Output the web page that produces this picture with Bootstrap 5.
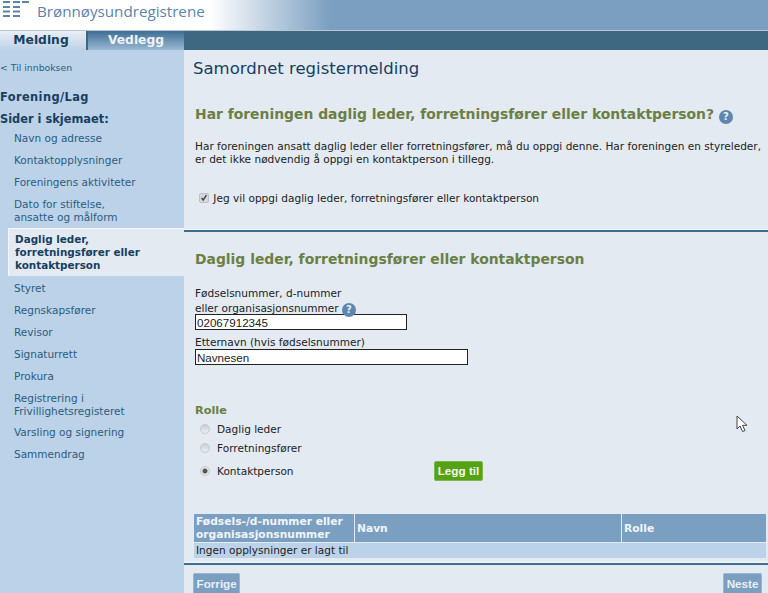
<!DOCTYPE html>
<html lang="no">
<head>
    <meta charset="UTF-8">
    <meta name="viewport" content="width=device-width, initial-scale=1.0">
    <title>Samordnet registermelding</title>
    <link href="https://cdn.jsdelivr.net/npm/bootstrap@5.3.0/dist/css/bootstrap.min.css" rel="stylesheet">
    <style>
        html, body { height: 593px; overflow: hidden; }
        body {
            font-family: "DejaVu Sans", Verdana, sans-serif;
            font-size: 10.55px;
            line-height: 13px;
            color: #222;
            background: #e3eaf2;
        }
        .top-banner {
            height: 31px;
            background: linear-gradient(90deg, #fff 0, #fff 210px, #7b9fc1 330px, #7b9fc1 100%);
            border-bottom: 1px solid #b9c6d2;
        }
        .logo-mark { margin: 0; display: block; flex: none; }
        .logo-name { font-family: "Open Sans", sans-serif; font-size: 15.2px; color: #5b84ab; margin-left: 8px; line-height: 23px; }
        .tab-row { height: 19px; background: #3e6882; }
        .side-col { width: 184px; flex: none; }
        .tab-on, .tab-off {
            height: 19px; font-weight: 700; font-size: 12.3px; line-height: 19px; text-align: center;
        }
        .tab-on { width: 88px; padding-right: 4px; color: #17405f; background: linear-gradient(#e9eff5, #bcd2e8); border-right: 2px solid #3e6882; }
        .tab-off { width: 96px; color: #eef4f9; background: linear-gradient(#3e6e94, #9bb8d3); }
        .page-body { height: 543px; }
        .side-nav { width: 184px; flex: none; background: #bcd2e8; color: #2b5d80; font-size: 10.5px; }
        .back-link { font-size: 9.3px; color: #2b5d80; margin-top: 11px; line-height: 13px; text-decoration: none; }
        .side-title { font-weight: 700; font-size: 11.4px; color: #17405f; line-height: 14px; }
        .side-org { letter-spacing: .4px; }
        .side-link { display: block; padding: 0 4px 0 14px; color: #2b5d80; text-decoration: none; line-height: 13px; margin-bottom: 9px; }
        .side-active {
            margin: -5px 0 6px 8px; padding: 4px 4px 4px 6px; background: #e3eaf2; font-weight: 700; color: #17405f; font-size: 10.4px;
            border-top: 1px solid #f4f7fa; border-left: 1px solid #f4f7fa;
        }
        .main-pane { flex: 1; min-width: 0; }
        .page-title { font-size: 16.5px; font-weight: 400; color: #17405f; margin: 9px 0 0 9px; line-height: 19px; }
        .sect-head { font-size: 13.9px; font-weight: 700; color: #6b7f45; line-height: 18px; margin: 0; }
        .help-dot {
            display: inline-block; width: 14px; height: 14px; border-radius: 50%; background: #5f86ae; color: #e8eff6;
            font-size: 10px; font-weight: 700; line-height: 14px; text-align: center; vertical-align: -1px; margin: -4px 0;
        }
        .pad-x { padding-left: 11px; }
        .intro-text { margin: 17px 0 0; width: 572px; }
        .tick-row { margin-top: 25px; line-height: 14px; }
        .tick-box {
            appearance: none; width: 10px; height: 10px; margin: 0 1px 0 4px; vertical-align: -1px;
            border: 1px solid #bcc2c8; border-radius: 2px;
            background: #d5d9de url("data:image/svg+xml,%3Csvg xmlns='http://www.w3.org/2000/svg' viewBox='0 0 10 10'%3E%3Cpath d='M2 5l2 2.500 4-6' fill='none' stroke='%23444' stroke-width='1.800'/%3E%3C/svg%3E") center/100% no-repeat;
        }
        .rule-line { border-top: 2px solid #3e6e8e; box-shadow: 0 -1px 0 #f4f7fa; margin: 0; }
        .id-label { margin-top: 18px; line-height: 15px; height: 28px; }
        .plain-input {
            display: block; height: 16px; border: 1px solid #222; background: #fff; font-family: "Liberation Sans", Arial, sans-serif; font-size: 11.6px;
            padding: 0 0 0 1px; color: #222; line-height: 14px; border-radius: 0;
        }
        .role-label { font-size: 11.3px; font-weight: 700; color: #6b7f45; }
        .role-opt { width: 239px; line-height: 13px; padding-left: 5px; }
        .role-dot {
            appearance: none; width: 10px; height: 10px; margin: 0 7px 0 0; vertical-align: -1px; border-radius: 50%;
            border: 1px solid #c4c9ce; background: linear-gradient(#c9ced3, #eceff2);
        }
        .role-dot:checked { background: radial-gradient(circle, #555 0, #555 2px, #e6e9ec 3px); }
        .btn-go {
            background: #55a314; color: #f3f8ee; font-family: "Liberation Sans", Arial, sans-serif; font-weight: 700; font-size: 11.7px; line-height: 18px; height: 20px;
            border: 1px solid #7ab84e; border-radius: 2px; padding: 0; width: 49px; white-space: nowrap; flex: none;
        }
        .btn-nav {
            background: #7b9fc1; color: #e9f0f6; font-family: "Liberation Sans", Arial, sans-serif; font-weight: 700; font-size: 11.7px; line-height: 19px; height: 20px;
            border: 1px solid #9bb6cf; border-bottom: 0; border-radius: 2px 2px 0 0; padding: 0 2.500px;
        }
        .reg-table { width: 574px; margin: 0 0 0 9px; border-collapse: separate; border-spacing: 1px; table-layout: fixed; }
        .reg-table th {
            background: #7b9fc1; color: #f0f5f9; font-weight: 700; font-size: 10.7px; line-height: 13px; padding: 1px 1px 1px 2px; height: 28px;
        }
        .reg-table td { background: #bcd2e8; padding: 1px 2px; height: 15px; line-height: 13px; color: #222; }
        .mouse-arrow { position: absolute; left: 736px; top: 415px; }
    </style>
</head>
<body>
    <div class="top-banner d-flex align-items-start">
        <svg class="logo-mark" width="29" height="20" viewBox="0 0 29 20" aria-hidden="true">
            <g fill="none" stroke="#5b84ab" stroke-width="2">
                <path d="M3 2h7M13 2h7M22 2h7"/>
                <path d="M3 7h7M13 7h7"/>
                <path d="M3 11.500h7M13 11.500h7"/>
                <path d="M3 16h7M13 16h7"/>
            </g>
        </svg>
        <div class="logo-name">Brønnøysundregistrene</div>
    </div>
    <div class="tab-row d-flex">
        <div class="side-col d-flex">
            <div class="tab-on">Melding</div>
            <div class="tab-off">Vedlegg</div>
        </div>
    </div>
    <div class="page-body d-flex">
        <nav class="side-nav">
            <a class="back-link d-block" href="#">&lt; Til innboksen</a>
            <div class="side-title side-org mt-3 mb-2">Forening/Lag</div>
            <div class="side-title" style="margin-bottom:6px">Sider i skjemaet:</div>
            <a class="side-link" href="#">Navn og adresse</a>
            <a class="side-link" href="#">Kontaktopplysninger</a>
            <a class="side-link" href="#">Foreningens aktiviteter</a>
            <a class="side-link" href="#">Dato for stiftelse,<br>ansatte og målform</a>
            <a class="side-link side-active" href="#">Daglig leder,<br>forretningsfører eller<br>kontaktperson</a>
            <a class="side-link" href="#">Styret</a>
            <a class="side-link" href="#">Regnskapsfører</a>
            <a class="side-link" href="#">Revisor</a>
            <a class="side-link" href="#">Signaturrett</a>
            <a class="side-link" href="#">Prokura</a>
            <a class="side-link" style="margin-bottom:8px" href="#">Registrering i<br>Frivillighetsregisteret</a>
            <a class="side-link" href="#">Varsling og signering</a>
            <a class="side-link" href="#">Sammendrag</a>
        </nav>
        <main class="main-pane">
            <h1 class="page-title">Samordnet registermelding</h1>
            <div class="pad-x" style="margin-top:27px">
                <h2 class="sect-head">Har foreningen daglig leder, forretningsfører eller kontaktperson? <span class="help-dot">?</span></h2>
                <p class="intro-text">Har foreningen ansatt daglig leder eller forretningsfører, må du oppgi denne. Har foreningen en styreleder, er det ikke nødvendig å oppgi en kontaktperson i tillegg.</p>
                <div class="tick-row"><input class="tick-box" type="checkbox" checked> Jeg vil oppgi daglig leder, forretningsfører eller kontaktperson</div>
            </div>
            <hr class="rule-line opacity-100" style="margin-top:25px">
            <div class="pad-x">
                <h2 class="sect-head" style="margin-top:18px">Daglig leder, forretningsfører eller kontaktperson</h2>
                <div class="id-label">Fødselsnummer, d-nummer<br>eller organisasjonsnummer <span class="help-dot">?</span></div>
                <input class="plain-input" style="width:212px" value="02067912345">
                <div style="margin-top:5px;line-height:14px">Etternavn (hvis fødselsnummer)</div>
                <input class="plain-input" style="width:273px" value="Navnesen">
                <div class="role-label" style="margin-top:39px">Rolle</div>
                <div class="role-opt" style="margin-top:6px"><input class="role-dot" type="radio" name="r">Daglig leder</div>
                <div class="role-opt" style="margin-top:6px"><input class="role-dot" type="radio" name="r">Forretningsfører</div>
                <div class="d-flex align-items-center" style="margin-top:6px">
                    <div class="role-opt"><input class="role-dot" type="radio" name="r" checked>Kontaktperson</div>
                    <button class="btn-go" type="button">Legg til</button>
                </div>
            </div>
            <table class="reg-table" style="margin-top:32px">
                <thead>
                    <tr><th style="width:160px">Fødsels-/d-nummer eller organisasjonsnummer</th><th>Navn</th><th style="width:144px">Rolle</th></tr>
                </thead>
                <tbody>
                    <tr><td colspan="3">Ingen opplysninger er lagt til</td></tr>
                </tbody>
            </table>
            <hr class="rule-line opacity-100" style="margin-top:4px">
            <div class="d-flex justify-content-between" style="padding:8px 6px 0 9px">
                <button class="btn-nav" type="button">Forrige</button>
                <button class="btn-nav" type="button">Neste</button>
            </div>
        </main>
    </div>
    <svg class="mouse-arrow" width="13" height="18" viewBox="0 0 13 18" aria-hidden="true">
        <path d="M1 1v13l3-3 2.500 5.500 2.500-1-2.500-5.200h4.500z" fill="#fff" stroke="#444" stroke-width="1"/>
    </svg>
</body>
</html>
